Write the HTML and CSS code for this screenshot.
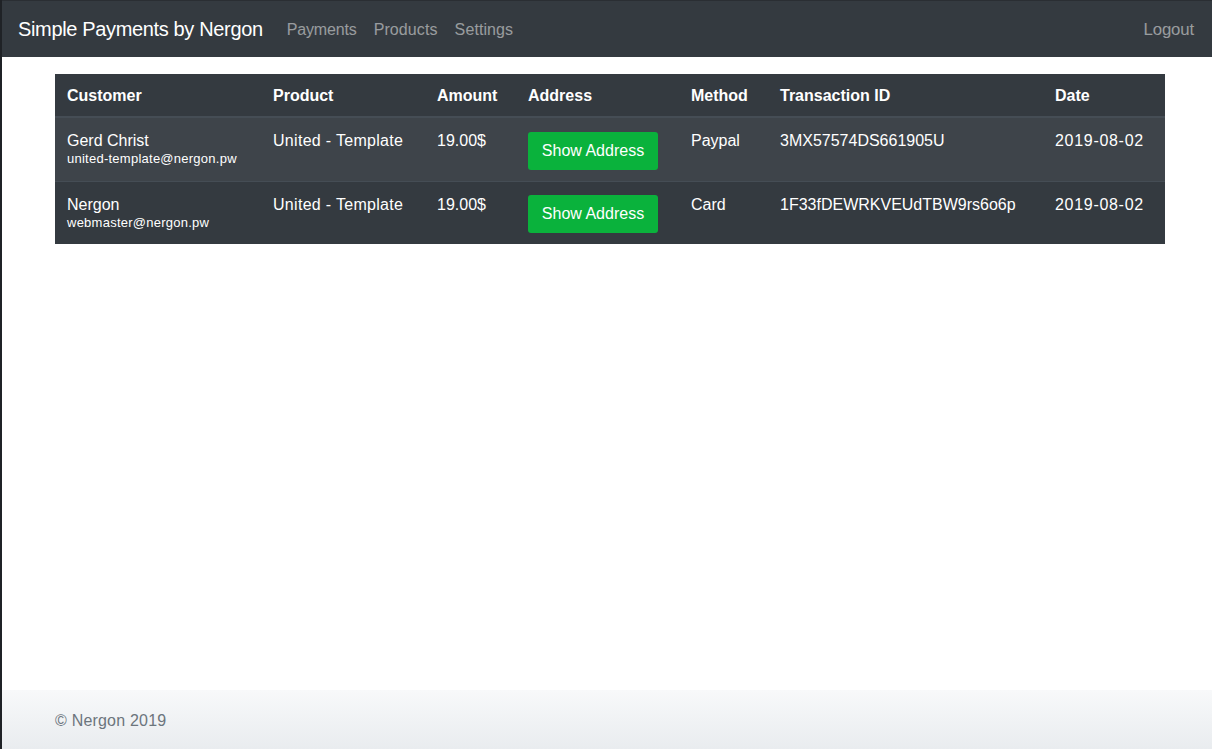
FILE: index.html
```html
<!DOCTYPE html>
<html lang="en">
<head>
<meta charset="utf-8">
<title>Simple Payments by Nergon</title>
<link rel="stylesheet" href="styles.css">
</head>
<body>
<div class="page">
  <nav class="navbar">
    <div class="nav-left">
      <a class="brand" href="#">Simple Payments by Nergon</a>
      <a class="nav-link" href="#">Payments</a>
      <a class="nav-link" href="#">Products</a>
      <a class="nav-link" href="#">Settings</a>
    </div>
    <a class="nav-link logout" href="#">Logout</a>
  </nav>
  <main class="content">
    <table class="table">
      <colgroup>
        <col class="c-customer"><col class="c-product"><col class="c-amount"><col class="c-address"><col class="c-method"><col class="c-txn"><col class="c-date">
      </colgroup>
      <thead>
        <tr>
          <th>Customer</th><th>Product</th><th>Amount</th><th>Address</th><th>Method</th><th>Transaction ID</th><th>Date</th>
        </tr>
      </thead>
      <tbody>
        <tr class="odd">
          <td><div class="name">Gerd Christ</div><div class="email">united-template@nergon.pw</div></td>
          <td class="product">United - Template</td>
          <td>19.00$</td>
          <td class="btn-cell"><button class="btn">Show Address</button></td>
          <td>Paypal</td>
          <td>3MX57574DS661905U</td>
          <td class="date">2019-08-02</td>
        </tr>
        <tr>
          <td><div class="name">Nergon</div><div class="email">webmaster@nergon.pw</div></td>
          <td class="product">United - Template</td>
          <td>19.00$</td>
          <td class="btn-cell"><button class="btn">Show Address</button></td>
          <td>Card</td>
          <td>1F33fDEWRKVEUdTBW9rs6o6p</td>
          <td class="date">2019-08-02</td>
        </tr>
      </tbody>
    </table>
  </main>
  <footer class="footer">
    <span class="copy">© Nergon 2019</span>
  </footer>
</div>
</body>
</html>
```
FILE: styles.css
```css
* { box-sizing: border-box; }
html, body { margin: 0; padding: 0; height: 100%; }
body {
  font-family: "Liberation Sans", Arial, sans-serif;
  font-size: 16px;
  color: #fff;
  background: #fff;
  border-left: 2px solid #1f2226;
}
.page {
  display: flex;
  flex-direction: column;
  height: 749px;
}
.navbar {
  height: 57px;
  background: #343a40;
  border-top: 1px solid #2a2e33;
  display: flex;
  align-items: center;
  justify-content: space-between;
  padding: 1px 18px 0 16px;
}
.nav-left { display: flex; align-items: center; }
a { text-decoration: none; }
.brand {
  color: #fff;
  font-size: 20px;
  margin-right: 24px;
  letter-spacing: -0.35px;
}
.nav-link {
  color: rgba(255,255,255,0.5);
  font-size: 16px;
  margin-right: 17px;
  letter-spacing: 0.1px;
}
.nav-link:nth-child(2) { letter-spacing: -0.15px; }
.logout { margin-right: 0; font-size: 16.8px; letter-spacing: 0.3px; }
.content {
  flex: 1;
  padding: 17px 0 0 53px;
}
.table {
  width: 1110px;
  border-collapse: collapse;
  table-layout: fixed;
  background: #343a40;
}
.c-customer { width: 206px; }
.c-product { width: 164px; }
.c-amount { width: 91px; }
.c-address { width: 163px; }
.c-method { width: 89px; }
.c-txn { width: 275px; }
.c-date { width: 122px; }
th {
  text-align: left;
  font-weight: bold;
  padding: 12px 12px 10px;
  line-height: 20px;
  border-bottom: 2px solid #454d55;
}
td {
  vertical-align: top;
  padding: 13px 12px 9px;
  line-height: 20px;
  border-top: 1px solid #454d55;
}
tbody tr:first-child td { border-top: none; }
tr.odd td { background: #3e444a; }
.name { line-height: 20px; }
.email { font-size: 13px; line-height: 16px; letter-spacing: 0.25px; }
.product { letter-spacing: 0.3px; }
.date { letter-spacing: 0.7px; }
td.btn-cell { padding-top: 13px; padding-bottom: 11px; }
tbody tr:first-child td.btn-cell { padding-top: 14px; }
.btn {
  display: block;
  font-family: inherit;
  font-size: 16px;
  color: #fff;
  background: #0ab23c;
  border: none;
  border-radius: 3px;
  width: 130px;
  height: 38px;
  padding: 0;
  line-height: 38px;
}
.footer {
  height: 59px;
  background: linear-gradient(#f8f9fa, #e9ecef);
  display: flex;
  align-items: center;
  padding: 2px 0 0 53px;
}
.copy { color: #6c757d; font-size: 16px; letter-spacing: 0.2px; }
```
